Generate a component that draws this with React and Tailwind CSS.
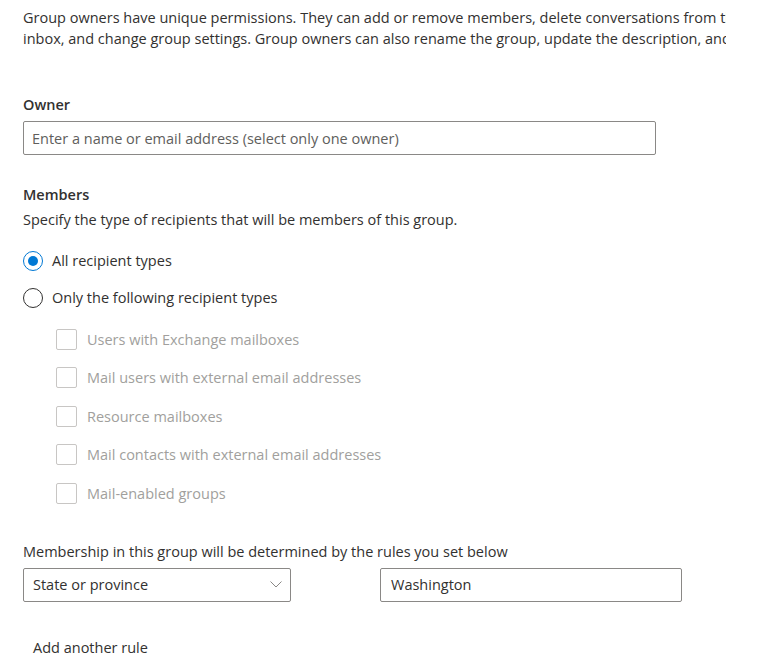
import React from "react";

const font = { fontFamily: '"Segoe UI", "Open Sans", "Noto Sans", sans-serif' };

const Checkbox = ({ label }) => (
    <div className="flex items-center h-[38.5px]">
        <span className="w-[21px] h-[21px] border border-[#c8c6c4] rounded-[2px] bg-white shrink-0" />
        <span className="ml-[10px] text-[#a19f9d]">{label}</span>
    </div>
);

const Radio = ({ checked, label }) => (
    <div className="flex items-center h-[37px]">
        <span
            className={
                checked
                    ? "w-[20px] h-[20px] rounded-full border border-[#0078d4] flex items-center justify-center shrink-0"
                    : "w-[20px] h-[20px] rounded-full border border-[#323130] shrink-0"
            }
        >
            {checked && <span className="w-[10px] h-[10px] rounded-full bg-[#0078d4]" />}
        </span>
        <span className="ml-[9px] text-[#323130]">{label}</span>
    </div>
);

export default function App() {
    const recipientTypes = [
        "Users with Exchange mailboxes",
        "Mail users with external email addresses",
        "Resource mailboxes",
        "Mail contacts with external email addresses",
        "Mail-enabled groups",
    ];

    return (
        <div className="w-[784px] h-[668px] bg-white overflow-hidden" style={font}>
            <div className="w-[726px] overflow-hidden pl-[23px] pt-[7px] text-[14.5px] leading-[21px] text-[#323130]">
                {/* intro */}
                <p className="whitespace-nowrap">
                    Group owners have unique permissions. They can add or remove members, delete conversations from the
                </p>
                <p className="whitespace-nowrap">
                    inbox, and change group settings. Group owners can also rename the group, update the description, and
                </p>

                {/* owner */}
                <div className="mt-[45px] font-semibold">Owner</div>
                <div className="mt-[6px] w-[633px] h-[34px] border border-[#8a8886] rounded-[2px] flex items-center px-[8px] text-[#605e5c]">
                    Enter a name or email address (select only one owner)
                </div>

                {/* members */}
                <div className="mt-[29px] font-semibold">Members</div>
                <div className="mt-[4px]">Specify the type of recipients that will be members of this group.</div>

                <div className="mt-[12px]">
                    <Radio checked label="All recipient types" />
                    <Radio label="Only the following recipient types" />
                </div>

                <div className="ml-[33px] mt-[4px]">
                    {recipientTypes.map((t) => (
                        <Checkbox key={t} label={t} />
                    ))}
                </div>

                {/* rules */}
                <div className="mt-[28px]">Membership in this group will be determined by the rules you set below</div>
                <div className="mt-[6px] flex items-center">
                    <div className="w-[268px] h-[34px] border border-[#8a8886] rounded-[2px] flex items-center justify-between pl-[9px] pr-[8px]">
                        <span>State or province</span>
                        <svg width="12" height="7" viewBox="0 0 12 7" fill="none">
                            <path d="M0.5 0.5 L6 6 L11.5 0.5" stroke="#8a8886" strokeWidth="1" />
                        </svg>
                    </div>
                    <div className="ml-[89px] w-[302px] h-[34px] border border-[#8a8886] rounded-[2px] flex items-center px-[10px]">
                        Washington
                    </div>
                </div>

                <div className="mt-[35px] ml-[10px]">Add another rule</div>
            </div>
        </div>
    );
}
